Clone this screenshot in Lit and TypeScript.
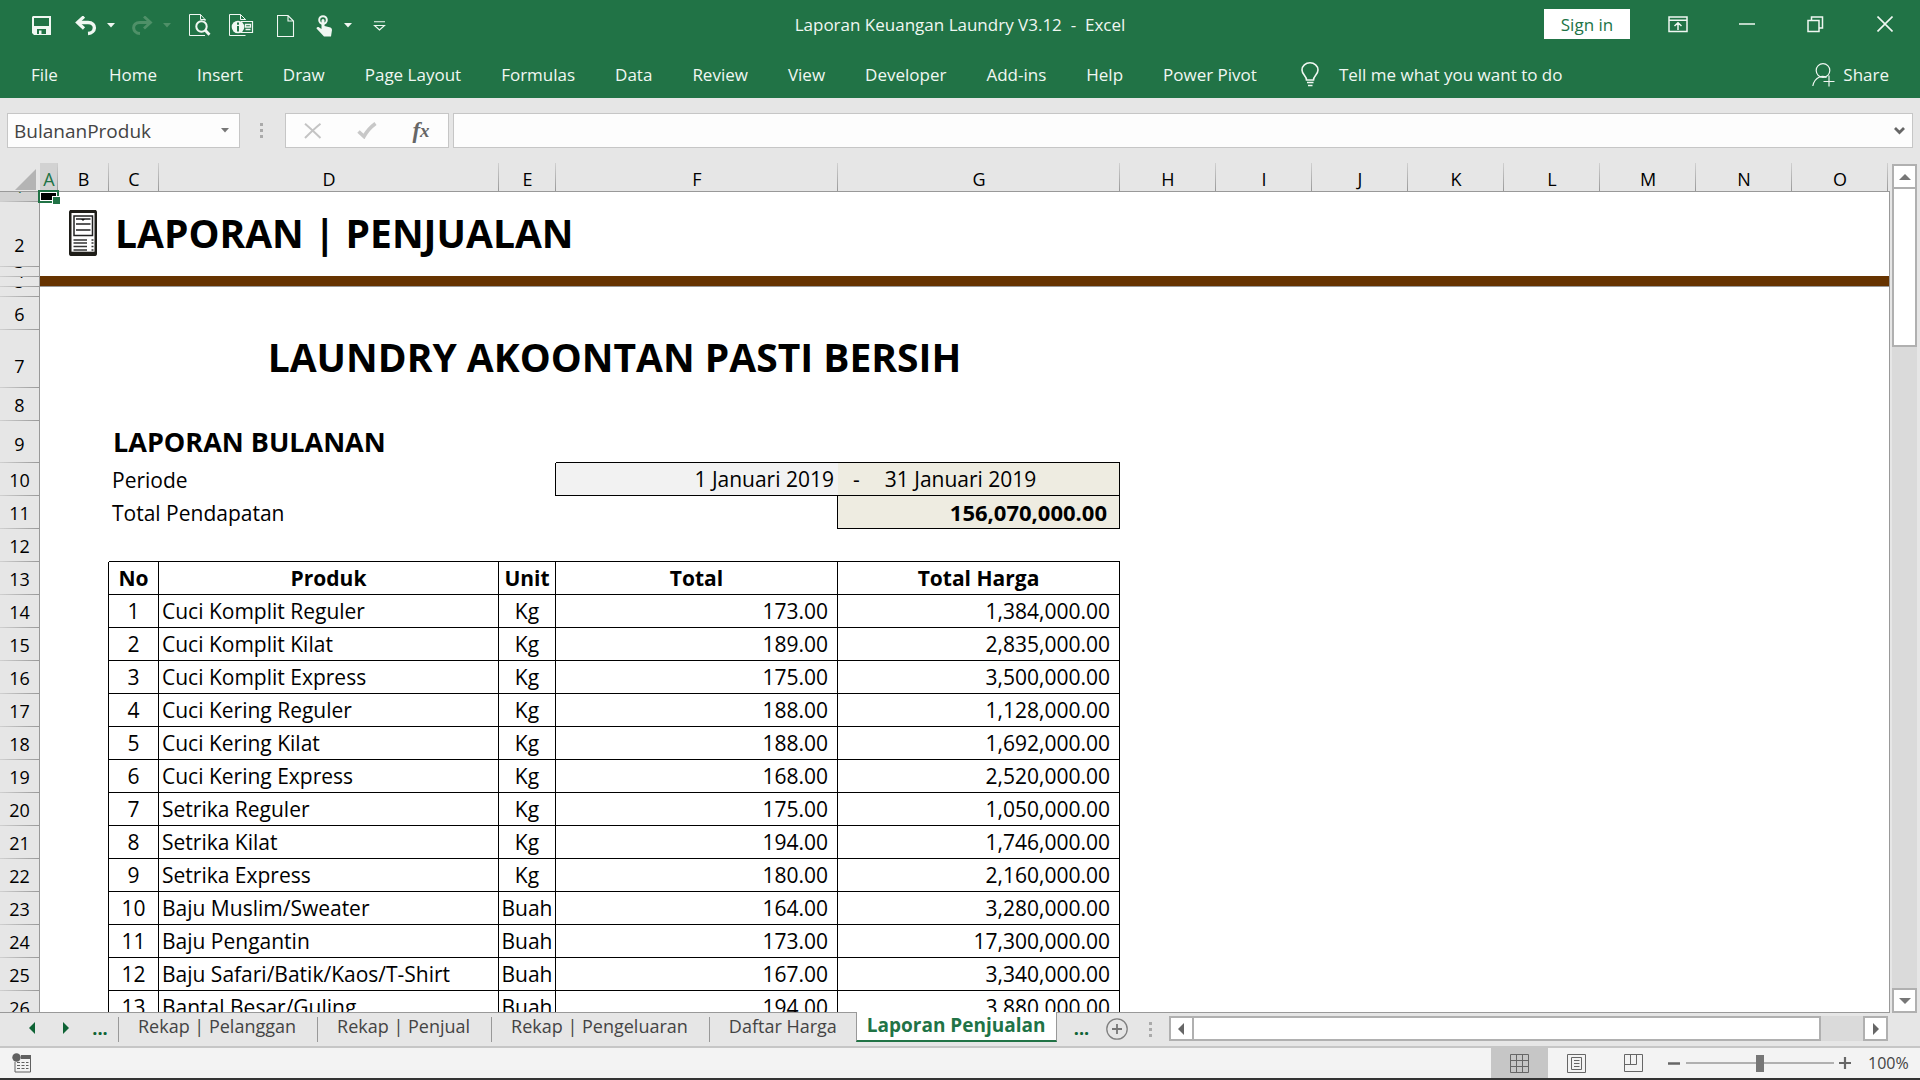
import { LitElement, html, css, svg, nothing } from "lit";
import { customElement, state } from "lit/decorators.js";

interface Product {
  no: number;
  name: string;
  unit: string;
  total: string;
  price: string;
}

const products: Product[] = [
  ["Cuci Komplit Reguler", "Kg", "173.00", "1,384,000.00"],
  ["Cuci Komplit Kilat", "Kg", "189.00", "2,835,000.00"],
  ["Cuci Komplit Express", "Kg", "175.00", "3,500,000.00"],
  ["Cuci Kering Reguler", "Kg", "188.00", "1,128,000.00"],
  ["Cuci Kering Kilat", "Kg", "188.00", "1,692,000.00"],
  ["Cuci Kering Express", "Kg", "168.00", "2,520,000.00"],
  ["Setrika Reguler", "Kg", "175.00", "1,050,000.00"],
  ["Setrika Kilat", "Kg", "194.00", "1,746,000.00"],
  ["Setrika Express", "Kg", "180.00", "2,160,000.00"],
  ["Baju Muslim/Sweater", "Buah", "164.00", "3,280,000.00"],
  ["Baju Pengantin", "Buah", "173.00", "17,300,000.00"],
  ["Baju Safari/Batik/Kaos/T-Shirt", "Buah", "167.00", "3,340,000.00"],
  ["Bantal Besar/Guling", "Buah", "194.00", "3,880,000.00"],
].map(([name, unit, total, price], i) => ({ no: i + 1, name, unit, total, price }));

const columns = ["A", "B", "C", "D", "E", "F", "G", "H", "I", "J", "K", "L", "M", "N", "O"];
const menus = ["Home", "Insert", "Draw", "Page Layout", "Formulas", "Data", "Review", "View", "Developer", "Add-ins", "Help", "Power Pivot"];
const sheets = ["Rekap | Pelanggan", "Rekap | Penjual", "Rekap | Pengeluaran", "Daftar Harga", "Laporan Penjualan"];

const icon = (w: number, h: number, body: unknown) =>
  html`<svg width=${w} height=${h} viewBox="0 0 ${w} ${h}" fill="none" aria-hidden="true">${body}</svg>`;

const saveIcon = icon(20, 20, svg`
  <path fill="#f0f7f2" fill-rule="evenodd" d="M0 1 1 0H19V19H2L0 17ZM2 2V10H17V2ZM5 13V18H7V14.500H9.500V18H14V13Z"/>`);
const undoIcon = icon(22, 20, svg`
  <path d="M3 6.500H13C22 6.500 21 17 13 17.500" stroke="currentColor" stroke-width="3.400"/>
  <path d="M9 .5 2.500 6.500 9 12.500" stroke="currentColor" stroke-width="3.200"/>`);
const redoIcon = icon(22, 20, svg`
  <path d="M19 6.500H9C0 6.500 1 17 9 17.500" stroke="currentColor" stroke-width="3"/>
  <path d="M13 .5 19.500 6.500 13 12.500" stroke="currentColor" stroke-width="2.800"/>`);
const caretIcon = icon(8, 5, svg`<path fill="currentColor" d="M0 0H8L4 4.500Z"/>`);
const previewIcon = icon(22, 23, svg`
  <path d="M16 7V5.500L11.500.5H.5V21.500H16M11.500.5V5.500H16.500" stroke="currentColor"/>
  <circle cx="12.500" cy="12.500" r="5.200" fill="#217346" stroke="currentColor" stroke-width="2"/>
  <path d="m16 16 4.500 4.800" stroke="currentColor" stroke-width="2.800"/>`);
const infoIcon = icon(25, 23, svg`
  <path d="M16.500 6V5.500L11.500.5H.5V21.500H16.500M11.500.5V5.500H16.500" stroke="currentColor"/>
  <path d="M12 7.500H23.500V18.500H12" fill="#217346" stroke="currentColor" stroke-width="1.200"/>
  <path d="M16.500 10.500h5v2.500h-5zM16.500 15.500h5" stroke="currentColor" stroke-width="1.300"/>
  <circle cx="9" cy="13" r="6.300" fill="currentColor"/>
  <path d="M9 8.500v2.200M9 12v5.500" stroke="#217346" stroke-width="2"/>`);
const pageIcon = icon(18, 22, svg`
  <path d="M.5.5H11L16.500 6V21.500H.5ZM11 .5V6H16.500" stroke="currentColor" stroke-width="1.100"/>`);
const touchIcon = icon(18, 22, svg`
  <circle cx="7" cy="5" r="3.800" stroke="currentColor" stroke-width="2"/>
  <path fill="currentColor" d="M5.500 5.500Q5.500 4 7 4T8.500 5.500V11L14.500 12.500Q16 13 16 15L15 21.500H8L.5 13.500Q.5 11.500 2.500 12L5.500 14Z"/>`);
const customizeIcon = icon(13, 10, svg`
  <path d="M1 .8H12M1.500 4.500H11.500L6.500 9Z" stroke="currentColor" stroke-width="1.100"/>`);
const ribbonIcon = icon(20, 17, svg`
  <path d="M1 1H19V15.500H1ZM1 4.300H19M10 14V7M6.500 10 10 6.800 13.500 10" stroke="currentColor" stroke-width="1.500"/>`);
const minimizeIcon = icon(16, 2, svg`<path d="M0 1H16" stroke="currentColor" stroke-width="1.500"/>`);
const restoreIcon = icon(17, 17, svg`
  <path d="M1 4.500H12V15.500H1ZM4.500 4V1H15.500V12H12.500" stroke="currentColor" stroke-width="1.500"/>`);
const closeIcon = icon(16, 16, svg`<path d="M.5.5 15.500 15.500M15.500.5.5 15.500" stroke="currentColor" stroke-width="1.600"/>`);
const bulbIcon = icon(18, 25, svg`
  <path d="M5.500 18C5.500 14 1 12.500 1 8A8 7.200 0 0 1 17 8C17 12.500 12.500 14 12.500 18ZM6 20.500H12.500M7 23.500H11.500" stroke="currentColor" stroke-width="1.600"/>`);
const shareIcon = icon(23, 24, svg`
  <circle cx="11" cy="7.500" r="6.800" stroke="currentColor" stroke-width="1.200"/>
  <path d="M.8 23Q2 16.500 7.500 14Q11 12.500 14.500 14.500M17 12.500V23.500M11.500 18.500H22.500" stroke="currentColor" stroke-width="1.200"/>`);
const cancelIcon = icon(18, 16, svg`<path d="M1 .8Q6 5 16.500 15M16.500.8Q10 6 1 15" stroke="#c4c4c4" stroke-width="2"/>`);
const acceptIcon = icon(20, 17, svg`<path d="M1.500 9.500 7 14.500Q11 7 18.500 1.500" stroke="#c8c8c8" stroke-width="3.600"/>`);
const expandIcon = icon(11, 8, svg`<path d="M1 1 5.500 5.500 10 1" stroke="#666" stroke-width="2.800"/>`);
const receiptIcon = icon(28, 46, svg`
  <rect x="1.200" y="1.200" width="25.600" height="43.600" rx="1.500" fill="#fff" stroke="#1e1d18" stroke-width="2.600"/>
  <path d="M1 1.500H27" stroke="#1e1d18" stroke-width="3"/>
  <path d="M1 43.500H27" stroke="#1e1d18" stroke-width="3.600"/>
  <rect x="5" y="6" width="18.500" height="19.500" stroke="#222" stroke-width="1.500"/>
  <path d="M7 9H21.500M7 14H21.500M7 20H21.500" stroke="#222" stroke-width="1.300"/>
  <path d="M12 9H16L14 11Z" fill="#111"/>
  <path d="M4.500 30H18M4.500 33H18M4.500 36.500H18M4.500 40H18" stroke="#333" stroke-width="1.500"/>
  <path d="M22.500 30H24.500M22.500 33H24.500M22.500 36.500H24.500M22.500 40H24.500" stroke="#333" stroke-width="1.500"/>`);
const upIcon = icon(12, 6, svg`<path fill="#777" d="M0 6H12L6 0Z"/>`);
const downIcon = icon(12, 6, svg`<path fill="#777" d="M0 0H12L6 6Z"/>`);
const leftIcon = icon(6, 12, svg`<path fill="currentColor" d="M6 0V12L0 6Z"/>`);
const rightIcon = icon(6, 12, svg`<path fill="currentColor" d="M0 0V12L6 6Z"/>`);
const addIcon = icon(22, 22, svg`
  <circle cx="11" cy="11" r="10.200" stroke="#808080" stroke-width="1.300"/><path d="M11 6V16M6 11H16" stroke="#777" stroke-width="1.800"/>`);
const macroIcon = icon(20, 20, svg`
  <circle cx="4.500" cy="4.500" r="4.200" fill="#606060"/>
  <path d="M3 9V19H18.500V3.500" stroke="#606060"/><path fill="#606060" d="M9 2H19V6H9Z"/>
  <path d="M5 9.500H16.500M5 12.500H16.500M5 15.500H16.500" stroke="#606060" stroke-width="1.200" stroke-dasharray="3 1.500"/>`);
const normalIcon = icon(19, 19, svg`<path d="M.5.5H18.500V18.500H.5ZM6.500.5V18.500M12.500.5V18.500M.5 6.500H18.500M.5 12.500H18.500" stroke="#666"/>`);
const layoutIcon = icon(19, 19, svg`<path d="M.5.5H18.500V18.500H.5ZM4.500 3.500H14.500V15.500H4.500ZM7 6.500H12.500M7 9.500H12.500M7 12.500H12.500" stroke="#666"/>`);
const breakIcon = icon(19, 18, svg`<path d="M.5.5H18.500V17.500H.5ZM6.500.5V10.500M.5 10.500H12.500V.5" stroke="#666"/>`);

@customElement("app-root")
export class AppRoot extends LitElement {
  @state() private activeSheet = 4;

  static styles = css`
    :host {
      display: block;
      font-family: "Open Sans", "Noto Sans", sans-serif;
      color: #000;
    }
    * { box-sizing: border-box; }
    button {
      display: inline-flex;
      align-items: center;
      justify-content: center;
      margin: 0;
      padding: 0;
      border: 0;
      background: none;
      color: inherit;
      font: inherit;
      cursor: pointer;
    }
    svg { display: block; flex: none; }
    .window {
      display: flex;
      flex-direction: column;
      height: 100vh;
      background: #e6e6e6;
      overflow: hidden;
    }
    .top { flex: none; height: 98px; background: #217346; color: #f0f7f2; }
    .titlebar {
      display: grid;
      grid-template-columns: 1fr auto 1fr;
      align-items: center;
      height: 48px;
      font-size: 17px;
    }
    .quick { display: flex; align-items: center; padding: 3px 0 0 32px; }
    .quick .save { margin-right: 23px; }
    .quick .arrow { margin: 0 16px 0 10px; }
    .quick .faded { color: #4f9068; }
    .quick .preview { margin: 0 18px 0 2px; }
    .quick .info { margin-right: 23px; }
    .quick .page { margin-right: 21px; }
    .quick .custom { margin-left: 5px; }
    .title { margin: 0; font-size: 17px; font-weight: 400; white-space: pre; }
    .system { display: flex; align-items: center; justify-content: flex-end; }
    .signin {
      width: 86px;
      height: 30px;
      margin-right: 13px;
      background: #fff;
      color: #217346;
    }
    .system .win { width: 69px; height: 46px; }
    .system .win:last-child { width: 70px; }
    .menubar {
      display: flex;
      align-items: center;
      height: 50px;
      padding: 3px 31px 0 11px;
      font-size: 17px;
      line-height: 24px;
    }
    .menubar button { height: 47px; padding: 0 20px; white-space: nowrap; }
    .menubar .file { margin-right: 11px; }
    .menubar .tell { gap: 20px; padding-left: 24px; }
    .menubar .share { gap: 8px; margin-left: auto; padding: 0; }
    .formula { flex: none; display: flex; align-items: center; height: 65px; padding: 0 7px; }
    .namebox {
      display: flex;
      align-items: center;
      width: 233px;
      height: 35px;
      background: #fdfdfd;
      border: 1px solid #c6c6c6;
      color: #777;
    }
    input[type="text"] {
      flex: 1;
      min-width: 0;
      height: 33px;
      padding: 0 6px;
      border: 0;
      outline: 0;
      background: none;
      color: #444;
      font: 19px "Open Sans", "Noto Sans", sans-serif;
    }
    .namebox button { width: 28px; height: 33px; }
    .dots { display: grid; gap: 3px; width: 3px; margin: 0 22px 0 20px; }
    .dots i { width: 3px; height: 3px; background: #aaa; }
    .tools {
      display: flex;
      align-items: center;
      justify-content: space-around;
      width: 164px;
      height: 35px;
      margin-right: 4px;
      background: #fdfdfd;
      border: 1px solid #c6c6c6;
    }
    .tools button { width: 54px; height: 33px; }
    .tools .fx { font: italic 700 23px "Liberation Serif", serif; color: #666; }
    .fx small { font-size: 19px; }
    .bar {
      flex: 1;
      display: flex;
      align-items: center;
      height: 35px;
      background: #fdfdfd;
      border: 1px solid #c6c6c6;
    }
    .bar button { width: 26px; height: 33px; }
    .main { flex: 1; display: flex; min-height: 0; }
    .sheet {
      flex: 1;
      min-width: 0;
      overflow: hidden;
      background: #fff;
      border-bottom: 1px solid #999;
    }
    table {
      width: 100%;
      table-layout: fixed;
      border-collapse: separate;
      border-spacing: 0;
      font-size: 21px;
      line-height: 24px;
    }
    th, td { padding: 0; font-weight: 400; white-space: nowrap; }
    .w-head { width: 40px; }
    .w-a { width: 18px; }
    .w-b { width: 51px; }
    .w-c { width: 50px; }
    .w-d { width: 340px; }
    .w-e { width: 57px; }
    .w-f, .w-g { width: 282px; }
    .w-n { width: 96px; }
    thead th {
      height: 29px;
      padding-top: 4px;
      border-bottom: 1px solid #999;
      background: linear-gradient(#d0d0d0, #999) right / 1px 100% no-repeat #e6e6e6;
      font-size: 18px;
    }
    thead .col-a { background-color: #d2d2d2; color: #217346; }
    thead .corner, thead .rest { background: #e6e6e6; }
    .corner svg { margin-left: 15px; }
    .label {
      display: flex;
      align-items: flex-end;
      justify-content: center;
      height: 33px;
      overflow: hidden;
      border-right: 1px solid #999;
      background: linear-gradient(90deg, #d0d0d0, #999) bottom / 100% 1px no-repeat #e6e6e6;
      font-size: 18px;
      line-height: 32px;
    }
    .label.r1, .label.r3, .label.r4, .label.r5 { height: 10px; }
    .label.r1 { background-color: #d2d2d2; color: #217346; }
    .label.r2 { height: 65px; padding-bottom: 6px; }
    .label.r7 { height: 58px; padding-bottom: 6px; }
    .label.r9 { height: 42px; padding-bottom: 3px; }
    .first { position: relative; }
    .selection {
      position: absolute;
      left: -2px;
      top: -2px;
      width: 21px;
      height: 13px;
      border: 2px solid #217346;
      outline: 0;
      background: #000;
      box-shadow: inset 0 0 0 1px #fff;
    }
    .selection::after {
      content: "";
      position: absolute;
      right: -4px;
      bottom: -4px;
      width: 7px;
      height: 7px;
      border: 1px solid #fff;
      background: #217346;
    }
    .report-icon { padding-bottom: 3px; }
    .report-icon svg { margin: 0 auto 0 11px; }
    .heading, .company { padding-bottom: 4px; font-size: 39px; line-height: 40px; font-weight: 700; }
    .heading { padding-left: 6px; text-align: left; }
    .company { text-align: center; }
    .section { padding-left: 4px; font-size: 27px; line-height: 32px; font-weight: 700; text-align: left; }
    .stripe { background: #663300; border-bottom: 1px solid #999; box-shadow: 0 -1px 0 #663300; }
    .text { padding-left: 3px; text-align: left; }
    .num { padding-right: 9px; text-align: right; }
    .center { text-align: center; }
    .br { border-right: 1px solid #000; }
    .bb { border-bottom: 1px solid #000; }
    .from { padding-right: 4px; background: #f2f2f2; text-align: right; }
    .to { background: #eeece1; }
    .range { display: flex; gap: 25px; padding-left: 15px; }
    .sum { padding-right: 12px; font-size: 22px; font-weight: 700; text-align: right; }
    .strong th { font-weight: 700; }
    .vscroll {
      flex: none;
      display: flex;
      flex-direction: column;
      width: 30px;
      padding: 1px 3px 0 2px;
    }
    .edge { flex: none; width: 1px; margin-top: 28px; background: #999; }
    .scroll-button {
      flex: none;
      width: 25px;
      height: 25px;
      border: 2px solid #b0b0b0;
      background: #fff;
      color: #666;
    }
    .vtrack { flex: 1; width: 25px; background: #dadada; }
    .vthumb { width: 25px; height: 20%; margin-top: -2px; border: 2px solid #b0b0b0; background: #fff; }
    .tabs {
      flex: none;
      display: flex;
      align-items: flex-start;
      height: 35px;
      border-bottom: 2px solid #c6c6c6;
      padding-right: 32px;
      font-size: 18px;
      line-height: 25px;
      color: #444;
    }
    .nav {
      display: flex;
      align-items: center;
      width: 119px;
      height: 30px;
      padding-left: 15px;
      background: linear-gradient(#999, #999) right 4px / 1px 25px no-repeat;
      color: #0e6335;
    }
    .nav .step { width: 34px; height: 30px; }
    .more { width: 34px; height: 30px; color: #0e6335; font-weight: 700; }
    .tab {
      height: 30px;
      padding: 0 22px 3px 19px;
      white-space: nowrap;
      background: linear-gradient(#999, #999) right 4px / 1px 25px no-repeat;
    }
    .tab.before { padding-right: 19px; background: none; }
    .tab.active {
      padding: 0 10px 1px;
      margin-top: -1px;
      border: 1px solid #999;
      border-top: 0;
      border-bottom: 2px solid #217346;
      background: #fff;
      color: #217346;
      font-size: 19px;
      font-weight: 700;
    }
    .tabs .more { margin-left: 8px; }
    .nav .more { margin-left: 0; }
    .add { width: 36px; height: 32px; }
    .tabs .dots { margin: 9px 17px 0 14px; }
    .hscroll { flex: 1; display: flex; height: 25px; margin-top: 3px; }
    .htrack { flex: 1; background: #dadada; }
    .hthumb { width: 94%; height: 25px; margin-left: -2px; border: 2px solid #b0b0b0; background: #fff; }
    .status {
      flex: none;
      display: flex;
      align-items: center;
      height: 32px;
      padding: 0 11px 0 12px;
      border-bottom: 2px solid #333;
      background: #f3f3f3;
      font-size: 16px;
      color: #444;
    }
    .views { display: flex; margin-left: auto; }
    .views button { width: 57px; height: 30px; }
    .views .on { background: #c6c6c6; }
    .zoom { display: flex; align-items: center; padding-left: 6px; }
    .zoom button { width: 12px; height: 30px; }
    input[type="range"] {
      appearance: none;
      width: 148px;
      height: 18px;
      margin: 0 5px 0 6px;
      background: linear-gradient(#b0b0b0, #b0b0b0) center / 100% 2px no-repeat;
    }
    input[type="range"]::-webkit-slider-thumb { appearance: none; width: 8px; height: 17px; background: #767676; }
    .percent { width: 41px; margin-left: 17px; }
  `;

  private label(n: number) {
    return html`<th scope="row"><div class="label r${n}">${n}</div></th>`;
  }

  private blank(n: number) {
    return html`<tr>${this.label(n)}<td colspan="16"></td></tr>`;
  }

  private renderTop() {
    return html`
      <header class="top">
        <div class="titlebar">
          <div class="quick">
            <button class="save" aria-label="Save">${saveIcon}</button>
            <button aria-label="Undo">${undoIcon}</button>
            <button class="arrow" aria-label="Undo history">${caretIcon}</button>
            <button class="faded" aria-label="Redo">${redoIcon}</button>
            <button class="arrow faded" aria-label="Redo history">${caretIcon}</button>
            <button class="preview" aria-label="Print preview">${previewIcon}</button>
            <button class="info" aria-label="Properties">${infoIcon}</button>
            <button class="page" aria-label="New">${pageIcon}</button>
            <button aria-label="Touch mode">${touchIcon}</button>
            <button class="arrow" aria-label="Touch mode options">${caretIcon}</button>
            <button class="custom" aria-label="Customize toolbar">${customizeIcon}</button>
          </div>
          <h1 class="title">Laporan Keuangan Laundry V3.12  -  Excel</h1>
          <div class="system">
            <button class="signin">Sign in</button>
            <button class="win" aria-label="Ribbon display options">${ribbonIcon}</button>
            <button class="win" aria-label="Minimize">${minimizeIcon}</button>
            <button class="win" aria-label="Restore">${restoreIcon}</button>
            <button class="win" aria-label="Close">${closeIcon}</button>
          </div>
        </div>
        <nav class="menubar">
          <button class="file">File</button>
          ${menus.map((m) => html`<button>${m}</button>`)}
          <button class="tell">${bulbIcon}<span>Tell me what you want to do</span></button>
          <button class="share">${shareIcon}<span>Share</span></button>
        </nav>
      </header>`;
  }

  private renderFormula() {
    return html`
      <div class="formula">
        <div class="namebox">
          <input type="text" aria-label="Name box" value="BulananProduk" />
          <button aria-label="Names">${caretIcon}</button>
        </div>
        <div class="dots"><i></i><i></i><i></i></div>
        <div class="tools">
          <button aria-label="Cancel">${cancelIcon}</button>
          <button aria-label="Enter">${acceptIcon}</button>
          <button class="fx" aria-label="Insert function">f<small>x</small></button>
        </div>
        <div class="bar">
          <input type="text" aria-label="Formula bar" />
          <button aria-label="Expand formula bar">${expandIcon}</button>
        </div>
      </div>`;
  }

  private renderSheet() {
    return html`
      <table>
        <colgroup>
          <col class="w-head" />
          ${columns.map((c) => html`<col class="w-${c < "H" ? c.toLowerCase() : "n"}" />`)}
          <col />
        </colgroup>
        <thead>
          <tr>
            <th class="corner" aria-label="Select all">${icon(21, 21, svg`<path fill="#b4b4b4" d="M21 0V21H0Z"/>`)}</th>
            ${columns.map((c) => html`<th scope="col" class="col-${c.toLowerCase()}">${c}</th>`)}
            <th class="rest"></th>
          </tr>
        </thead>
        <tbody>
          <tr>${this.label(1)}<td class="first"><div class="selection"></div></td><td colspan="15"></td></tr>
          <tr>
            ${this.label(2)}<td></td>
            <td class="report-icon">${receiptIcon}</td>
            <td class="heading" colspan="14">LAPORAN | PENJUALAN</td>
          </tr>
          ${this.blank(3)}
          <tr>${this.label(4)}<td class="stripe" colspan="16"></td></tr>
          ${this.blank(5)} ${this.blank(6)}
          <tr>${this.label(7)}<td colspan="2"></td><td class="company" colspan="5">LAUNDRY AKOONTAN PASTI BERSIH</td><td colspan="9"></td></tr>
          ${this.blank(8)}
          <tr>
            ${this.label(9)}<td colspan="2"></td>
            <td class="section" colspan="3">LAPORAN BULANAN</td>
            <td class="bb"></td><td class="bb"></td><td colspan="9"></td>
          </tr>
          <tr>
            ${this.label(10)}<td colspan="2"></td>
            <td class="text br" colspan="3">Periode</td>
            <td class="from bb">1 Januari 2019</td>
            <td class="to br bb"><div class="range"><span>-</span><span>31 Januari 2019</span></div></td>
            <td colspan="9"></td>
          </tr>
          <tr>
            ${this.label(11)}<td colspan="2"></td>
            <td class="text" colspan="3">Total Pendapatan</td>
            <td class="br"></td>
            <td class="to sum br bb">156,070,000.00</td>
            <td colspan="9"></td>
          </tr>
          <tr>${this.label(12)}<td colspan="2"></td><td class="bb" colspan="5"></td><td colspan="9"></td></tr>
          <tr class="strong">
            <td><div class="label r13">13</div></td><td></td><td class="br"></td>
            ${["No", "Produk", "Unit", "Total", "Total Harga"].map((h) => html`<th scope="col" class="br bb center">${h}</th>`)}
            <td colspan="9"></td>
          </tr>
          ${products.map((p) => html`
            <tr>
              ${this.label(p.no + 13)}<td></td><td class="br"></td>
              <td class="br bb center">${p.no}</td>
              <td class="br bb text">${p.name}</td>
              <td class="br bb center">${p.unit}</td>
              <td class="br bb num">${p.total}</td>
              <td class="br bb num">${p.price}</td>
              <td colspan="9"></td>
            </tr>`)}
        </tbody>
      </table>`;
  }

  private renderTabs() {
    return html`
      <div class="tabs">
        <div class="nav">
          <button class="step" aria-label="Previous sheet">${leftIcon}</button>
          <button class="step" aria-label="Next sheet">${rightIcon}</button>
          <button class="more">...</button>
        </div>
        ${sheets.map((s, i) => {
          const kind = i === this.activeSheet ? "active" : i + 1 === this.activeSheet ? "before" : "";
          return html`<button class="tab ${kind}" aria-current=${kind === "active" ? "page" : nothing}
            @click=${() => (this.activeSheet = i)}>${s}</button>`;
        })}
        <button class="more">...</button>
        <button class="add" aria-label="New sheet">${addIcon}</button>
        <div class="dots"><i></i><i></i><i></i></div>
        <div class="hscroll">
          <button class="scroll-button" aria-label="Scroll left">${leftIcon}</button>
          <div class="htrack"><div class="hthumb"></div></div>
          <button class="scroll-button" aria-label="Scroll right">${rightIcon}</button>
        </div>
      </div>`;
  }

  private renderStatus() {
    return html`
      <footer class="status">
        <button aria-label="Record macro">${macroIcon}</button>
        <div class="views">
          <button class="on" aria-label="Normal view">${normalIcon}</button>
          <button aria-label="Page layout view">${layoutIcon}</button>
          <button aria-label="Page break preview">${breakIcon}</button>
        </div>
        <div class="zoom">
          <button aria-label="Zoom out">${icon(12, 3, svg`<path d="M0 1.500H12" stroke="#666" stroke-width="2.500"/>`)}</button>
          <input type="range" aria-label="Zoom" min="0" max="200" value="100" />
          <button aria-label="Zoom in">${icon(12, 12, svg`<path d="M0 6H12M6 0V12" stroke="#666" stroke-width="2.200"/>`)}</button>
          <span class="percent">100%</span>
        </div>
      </footer>`;
  }

  render() {
    return html`
      <div class="window">
        ${this.renderTop()} ${this.renderFormula()}
        <div class="main">
          <div class="sheet">${this.renderSheet()}</div>
          <div class="edge"></div>
          <div class="vscroll">
            <button class="scroll-button" aria-label="Scroll up">${upIcon}</button>
            <div class="vtrack"><div class="vthumb"></div></div>
            <button class="scroll-button" aria-label="Scroll down">${downIcon}</button>
          </div>
        </div>
        ${this.renderTabs()} ${this.renderStatus()}
      </div>`;
  }
}
